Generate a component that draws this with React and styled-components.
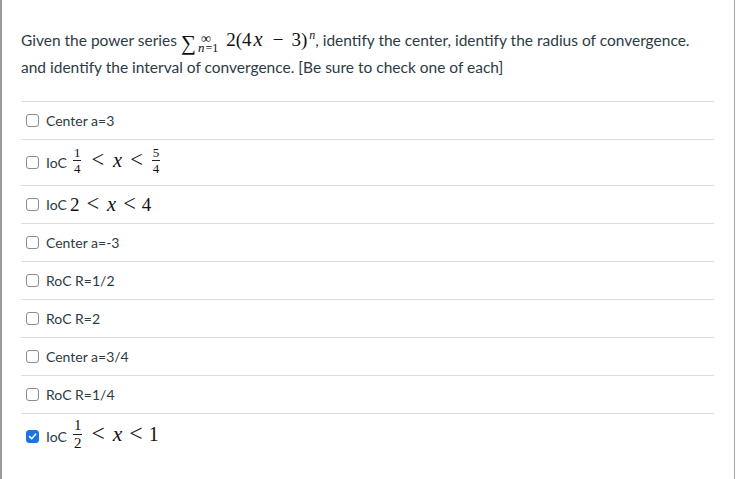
import React from "react";
import styled, { createGlobalStyle } from "styled-components";

const Global = createGlobalStyle`
  html, body { margin: 0; padding: 0; background: #fff; }
  body { font-family: Lato, "Open Sans", sans-serif; color: #2d3b45; }
`;

const Page = styled.div`
  box-sizing: border-box;
  width: 735px;
  min-height: 479px;
  border-left: 2px solid #9a9a9a;
  border-right: 1px solid #a5a5a5;
  padding: 26px 20px 0 19px;
`;

const Question = styled.div`
  font-size: 15.5px;
  line-height: 27px;
  margin-bottom: 20px;
`;

const List = styled.div`
  display: flex;
  flex-direction: column;
`;

const Row = styled.label`
  display: flex;
  align-items: center;
  height: ${(p) => p.$h}px;
  border-top: 1px solid #dcdcdc;
  font-size: 14px;
  box-sizing: border-box;
`;

const Box = styled.span`
  box-sizing: border-box;
  flex: none;
  width: 13px;
  height: 13px;
  margin: 0 7px 0 5px;
  border-radius: 3px;
  border: 1px solid ${(p) => (p.$on ? "#1a73e8" : "#8c8c8c")};
  background: ${(p) => (p.$on ? "#1a73e8" : "#fff")};
  display: inline-flex;
  align-items: center;
  justify-content: center;
`;

const Math = styled.span`
  font-family: "Liberation Serif", "Times New Roman", serif;
  font-size: ${(p) => p.$size || 17}px;
  white-space: nowrap;
  color: #111;
  margin-left: ${(p) => p.$ml ?? 0}px;
`;

const Var = styled.span`
  font-family: "Liberation Serif", serif;
  font-style: italic;
  font-size: 1.08em;
  padding: 0 ${(p) => p.$pad ?? 1}px;
`;

const Rel = styled.span`
  font-size: ${(p) => (p.$big ? "1.18em" : "1em")};
  line-height: 1;
  margin: 0 ${(p) => p.$m ?? 5}px;
`;

const Frac = styled.span`
  display: inline-flex;
  flex-direction: column;
  align-items: center;
  font-size: ${(p) => p.$size}px;
  line-height: 1;
  vertical-align: middle;
  margin: 0 2px;
  position: relative;
  top: -2px;
`;

const Num = styled.span`
  padding: 0 1px 1px;
  border-bottom: 1px solid #222;
`;

const Den = styled.span`
  padding-top: 1px;
`;

const Sum = styled.span`
  display: inline-flex;
  align-items: center;
  font-family: "Liberation Serif", serif;
  margin: 0 0 0 4px;
  vertical-align: -4px;
  color: #111;
`;

const SumSign = styled.span`
  font-size: 21px;
  line-height: 1;
`;

const Limits = styled.span`
  display: inline-flex;
  flex-direction: column;
  font-size: 12px;
  line-height: 10px;
  margin-left: 1px;
`;

const Inf = styled.span`
  font-size: 14px;
  line-height: 9px;
  margin-left: 4px;
`;

const Sup = styled.sup`
  font-size: 12px;
  line-height: 0;
  font-style: italic;
  margin-left: 2px;
`;

const Label = styled.span`
  display: inline-flex;
  align-items: center;
  gap: ${(p) => p.$gap ?? 4}px;
`;

const F = ({ n, d, size }) => (
  <Frac $size={size}>
    <Num>{n}</Num>
    <Den>{d}</Den>
  </Frac>
);

const Check = ({ on }) => (
  <Box $on={on}>
    {on && (
      <svg width="9" height="9" viewBox="0 0 9 9">
        <path d="M1.5 4.6 L3.6 6.7 L7.6 2.2" fill="none" stroke="#fff" strokeWidth="1.6" strokeLinecap="round" strokeLinejoin="round" />
      </svg>
    )}
  </Box>
);

export default function App() {
  return (
    <>
      <Global />
      <Page>
        <Question>
          Given the power series
          <Sum>
            <SumSign>∑</SumSign>
            <Limits>
              <Inf>∞</Inf>
              <span>
                <Var $pad={1}>n</Var>=1
              </span>
            </Limits>
          </Sum>
          <Math $size={19} $ml={8}>
            2(4<Var $pad={2}>x</Var>
            <Rel $m={8}>−</Rel>3)<Sup>n</Sup>
          </Math>
          , identify the center, identify the radius of convergence.
          <br />
          and identify the interval of convergence. [Be sure to check one of each]
        </Question>
        <List>
          <Row $h={38}>
            <Check />
            <span>Center a=3</span>
          </Row>
          <Row $h={46}>
            <Check />
            <Label>
              IoC
              <Math $size={19}>
                <F n="1" d="4" size={13} />
                <Rel $big $m={8}>&lt;</Rel>
                <Var $pad={1}>x</Var>
                <Rel $big $m={7}>&lt;</Rel>
                <F n="5" d="4" size={13} />
              </Math>
            </Label>
          </Row>
          <Row $h={38}>
            <Check />
            <Label $gap={3}>
              IoC
              <Math $size={19}>
                2<Rel $big $m={7}>&lt;</Rel>
                <Var $pad={1}>x</Var>
                <Rel $big $m={6}>&lt;</Rel>4
              </Math>
            </Label>
          </Row>
          <Row $h={38}>
            <Check />
            <span>Center a=-3</span>
          </Row>
          <Row $h={38}>
            <Check />
            <span>RoC R=1/2</span>
          </Row>
          <Row $h={38}>
            <Check />
            <span>RoC R=2</span>
          </Row>
          <Row $h={38}>
            <Check />
            <span>Center a=3/4</span>
          </Row>
          <Row $h={38}>
            <Check />
            <span>RoC R=1/4</span>
          </Row>
          <Row $h={46}>
            <Check on />
            <Label>
              IoC
              <Math $size={20}>
                <F n="1" d="2" size={15} />
                <Rel $big $m={7}>&lt;</Rel>
                <Var $pad={1}>x</Var>
                <Rel $big $m={6}>&lt;</Rel>1
              </Math>
            </Label>
          </Row>
        </List>
      </Page>
    </>
  );
}
